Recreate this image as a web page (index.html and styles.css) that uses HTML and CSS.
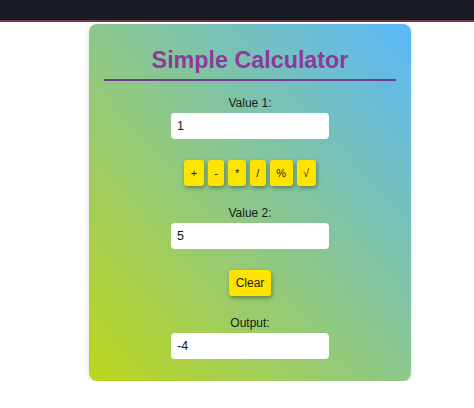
FILE: index.html
```html
<!DOCTYPE html>
<html>
<head>
<meta charset="utf-8">
<link rel="stylesheet" href="styles.css">
</head>
<body>
<div class="topbar"></div>
<div class="card">
  <h1 class="title">Simple Calculator</h1>
  <hr class="rule">
  <label class="label" for="v1">Value 1:</label>
  <input class="field" id="v1" type="text" value="1">
  <div class="ops">
    <button class="btn op">+</button>
    <button class="btn op">-</button>
    <button class="btn op">*</button>
    <button class="btn op">/</button>
    <button class="btn op">%</button>
    <button class="btn op">√</button>
  </div>
  <label class="label gap" for="v2">Value 2:</label>
  <input class="field" id="v2" type="text" value="5">
  <div class="ops">
    <button class="btn clear">Clear</button>
  </div>
  <label class="label gap" for="out">Output:</label>
  <input class="field" id="out" type="text" value="-4">
</div>
</body>
</html>
```

FILE: styles.css
```css
html, body {
  margin: 0;
  padding: 0;
  background: #ffffff;
  font-family: "Liberation Sans", Arial, sans-serif;
}

.topbar {
  height: 20px;
  background: #1a1c23;
  border-bottom: 2px solid #6d3b4b;
}

.card {
  width: 322px;
  box-sizing: border-box;
  margin: 2px 0 0 89px;
  padding: 23px 15px 22px;
  border-radius: 8px;
  background: linear-gradient(to top right, #bdd61c, #5ab8fb);
  box-shadow: 0 1px 5px rgba(0, 0, 0, 0.15);
  display: flex;
  flex-direction: column;
  align-items: center;
}

.title {
  margin: 0;
  font-size: 23.3px;
  line-height: 27px;
  font-weight: bold;
  color: #8e3a98;
}

.rule {
  align-self: stretch;
  margin: 5px 0 0;
  border: 0;
  height: 2px;
  background: #73398a;
}

.label {
  display: block;
  margin-top: 15px;
  font-size: 12px;
  line-height: 14px;
  color: #17201a;
}

.label.gap {
  margin-top: 20px;
}

.field {
  margin-top: 3px;
  width: 158px;
  height: 26px;
  box-sizing: border-box;
  border: 0;
  border-radius: 4px;
  padding: 0 6px;
  background: #ffffff;
  font-family: "Liberation Sans", Arial, sans-serif;
  font-size: 12.5px;
  color: #111;
  outline: none;
}

.ops {
  margin-top: 21px;
  display: flex;
  gap: 4px;
  justify-content: center;
}

.btn {
  height: 26px;
  box-sizing: border-box;
  border: 0;
  border-radius: 3px;
  background: #ffe400;
  color: #1a1a1a;
  font-family: "Liberation Sans", Arial, sans-serif;
  box-shadow: 1px 2px 4px rgba(0, 0, 0, 0.35);
  padding: 0 6.5px;
  cursor: pointer;
}

.op {
  font-size: 11px;
}

.clear {
  font-size: 12px;
  padding: 0 6.5px;
}
```
